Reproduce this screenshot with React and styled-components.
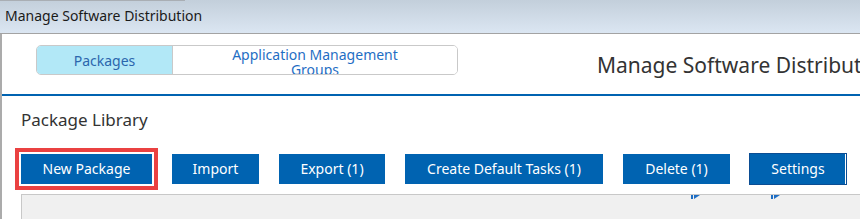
import styled, { createGlobalStyle } from 'styled-components';

const GlobalStyle = createGlobalStyle`
  html, body {
    margin: 0;
    padding: 0;
    background: #ffffff;
  }
  body {
    width: 860px;
    height: 219px;
    overflow: hidden;
    font-family: 'Noto Sans', 'DejaVu Sans', sans-serif;
  }
`;

const Window = styled.div`
  display: flex;
  flex-direction: column;
  width: 860px;
  height: 219px;
  overflow: hidden;
`;

const TitleBar = styled.div`
  position: relative;
  display: flex;
  align-items: center;
  height: 34px;
  padding: 0 0 3px 5px;
  box-sizing: border-box;
  background: linear-gradient(#c3cfdb, #dbe6f2);
  border-bottom: 1px solid #a3a3a3;
  color: #1a1a1a;
  font-size: 14px;
  white-space: nowrap;

  &::before {
    content: '';
    position: absolute;
    top: 0;
    left: 0;
    width: 185px;
    height: 1px;
    background: #a9aeb4;
  }
`;

const Body = styled.div`
  flex: 1;
  display: flex;
  flex-direction: column;
  border-left: 2px solid #ababab;
  background: #ffffff;
  min-height: 0;
`;

const Header = styled.div`
  display: flex;
  align-items: flex-start;
  height: 62px;
  padding-top: 11px;
  box-sizing: border-box;
  border-bottom: 2px solid #0063b1;
  white-space: nowrap;
  overflow: hidden;
`;

const Tabs = styled.div`
  display: flex;
  margin-left: 34px;
  width: 422px;
  height: 30px;
  box-sizing: border-box;
  border: 1px solid #c9c9c9;
  border-radius: 5px;
  overflow: hidden;
  flex-shrink: 0;
`;

const Tab = styled.div`
  display: flex;
  justify-content: center;
  align-items: ${(p) => (p.$wrap ? 'flex-start' : 'center')};
  width: ${(p) => p.$width}px;
  background: ${(p) => (p.$active ? '#b2e8f7' : '#ffffff')};
  border-right: ${(p) => (p.$active ? '1px solid #c9c9c9' : 'none')};
  color: ${(p) => (p.$active ? '#2b66ad' : '#1f6ec4')};
  font-size: 14px;
  line-height: 15px;
  text-align: center;
  white-space: normal;
  padding-top: ${(p) => (p.$wrap ? '1px' : '0')};
  box-sizing: border-box;
`;

const PageTitle = styled.div`
  margin-left: 139px;
  margin-top: 7px;
  color: #333333;
  font-size: 21px;
  line-height: 26px;
  flex-shrink: 0;
`;

const Section = styled.div`
  flex: 1;
  display: flex;
  flex-direction: column;
  padding-left: 19px;
  min-height: 0;
`;

const SectionTitle = styled.div`
  margin-top: 13px;
  color: #333333;
  font-size: 17px;
  line-height: 22px;
`;

const Toolbar = styled.div`
  display: flex;
  align-items: center;
  gap: 20px;
  margin-top: 21px;
  height: 34px;
`;

const Highlight = styled.div`
  display: flex;
  margin: 0 -6px;
  padding: 2px;
  border: 4px solid #ea4141;
`;

const Button = styled.button`
  width: ${(p) => p.$width}px;
  height: ${(p) => (p.$focused ? 32 : 30)}px;
  margin: ${(p) => (p.$focused ? '0 0 0 -1px' : '0')};
  padding: 0;
  border: ${(p) => (p.$focused ? '1px solid #0b4d93' : 'none')};
  box-shadow: ${(p) => (p.$focused ? 'inset -1px 0 0 #ffffff' : 'none')};
  background: #0063b1;
  color: #ffffff;
  font-family: 'Noto Sans', 'DejaVu Sans', sans-serif;
  font-size: 14px;
  line-height: 28px;
  white-space: nowrap;
  cursor: pointer;
`;

const Grid = styled.div`
  flex: 1;
  margin-top: 8px;
  border-top: 1px solid #c8c8c8;
  border-left: 1px solid #c8c8c8;
  background: #f0f0f0;
`;

const GridHeader = styled.div`
  display: grid;
  grid-template-columns: 669px 80px 1fr;
`;

const Column = styled.div`
  height: 10px;
`;

const SortIcon = () => (
  <svg width="9" height="5" viewBox="0 0 9 5" style={{ display: 'block' }}>
    <rect x="0" y="0" width="2" height="4" fill="#1f6ec4" />
    <polygon points="3,0 9,0 3,4" fill="#1f6ec4" />
  </svg>
);

const buttons = [
  { label: 'Import', width: 87 },
  { label: 'Export (1)', width: 106 },
  { label: 'Create Default Tasks (1)', width: 198 },
  { label: 'Delete (1)', width: 107 },
];

const App = () => {
  return (
    <>
      <GlobalStyle />
      <Window>
        <TitleBar>Manage Software Distribution</TitleBar>
        <Body>
          <Header>
            <Tabs>
              <Tab $active $width={136}>
                Packages
              </Tab>
              <Tab $wrap $width={284}>
                Application Management
                <br />
                Groups
              </Tab>
            </Tabs>
            <PageTitle>Manage Software Distribution</PageTitle>
          </Header>
          <Section>
            <SectionTitle>Package Library</SectionTitle>
            <Toolbar>
              <Highlight>
                <Button $width={131}>New Package</Button>
              </Highlight>
              {buttons.map((b) => (
                <Button key={b.label} $width={b.width}>
                  {b.label}
                </Button>
              ))}
              <Button $width={98} $focused>
                Settings
              </Button>
            </Toolbar>
            <Grid>
              <GridHeader>
                <Column />
                <Column>
                  <SortIcon />
                </Column>
                <Column>
                  <SortIcon />
                </Column>
              </GridHeader>
            </Grid>
          </Section>
        </Body>
      </Window>
    </>
  );
};

export default App;
